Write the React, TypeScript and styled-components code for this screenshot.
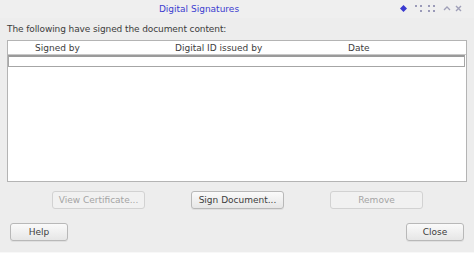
import React from 'react';
import styled, { createGlobalStyle } from 'styled-components';

const GlobalStyle = createGlobalStyle`
  html, body {
    margin: 0;
    padding: 0;
    background: #ededed;
  }
  * {
    box-sizing: border-box;
  }
`;

const Window = styled.div`
  width: 474px;
  height: 253px;
  display: flex;
  flex-direction: column;
  background: #ededed;
  font-family: 'DejaVu Sans', sans-serif;
  font-size: 9px;
  color: #3c3c3c;
  border-bottom: 1px solid #f8f8f8;
  overflow: hidden;
`;

const TitleBar = styled.div`
  height: 18px;
  display: flex;
  align-items: center;
  justify-content: center;
  position: relative;
  padding-right: 76px;
  background: #efefef;
`;

const Title = styled.span`
  color: #3c3ccf;
  font-size: 9px;
  padding-bottom: 1px;
`;

const Controls = styled.div`
  position: absolute;
  right: 12px;
  top: 5px;
  display: flex;
  align-items: center;
`;

const Ctl = styled.span<{ $gap: number }>`
  display: flex;
  margin-left: ${({ $gap }) => $gap}px;
`;

const Body = styled.div`
  flex: 1;
  display: flex;
  flex-direction: column;
  padding: 0 7px;
`;

const Caption = styled.div`
  height: 22px;
  display: flex;
  align-items: center;
  padding-bottom: 1px;
  letter-spacing: -0.1px;
`;

const Table = styled.div`
  width: 460px;
  height: 142px;
  background: #ffffff;
  border: 1px solid #b4b4b4;
  display: flex;
  flex-direction: column;
`;

const HeaderRow = styled.div`
  height: 14px;
  display: grid;
  grid-template-columns: 27px 140px 173px 1fr;
  align-items: center;
  border-bottom: 1px solid #c8c8c8;
`;

const HeaderCell = styled.span`
  white-space: nowrap;
`;

const FocusRow = styled.div`
  height: 12px;
  margin-right: 1px;
  border: 1px solid #a6a6a6;
  border-top: 2px solid #9a9a9a;
`;

const ActionRow = styled.div`
  height: 41px;
  display: flex;
  align-items: flex-start;
  padding: 9px 0 0 45px;
  gap: 46px;
`;

const Button = styled.button<{ $w: number; $disabled?: boolean }>`
  width: ${({ $w }) => $w}px;
  height: 18px;
  padding: 0;
  font-family: 'DejaVu Sans', sans-serif;
  font-size: 9px;
  border-radius: 3px;
  border: 1px solid ${({ $disabled }) => ($disabled ? '#d2d2d2' : '#b8b8b8')};
  color: ${({ $disabled }) => ($disabled ? '#a4a4a4' : '#3c3c3c')};
  background: ${({ $disabled }) =>
    $disabled ? '#f1f1f1' : 'linear-gradient(#fafafa, #e6e6e6)'};
  box-shadow: ${({ $disabled }) => ($disabled ? 'none' : '0 1px 0 rgba(0,0,0,0.06)')};
`;

const FooterRow = styled.div`
  display: flex;
  justify-content: space-between;
  padding: 0 3px;
`;

const Diamond = () => (
  <svg width="7" height="7" viewBox="0 0 7 7">
    <path d="M3.5 0 L7 3.5 L3.5 7 L0 3.5 Z" fill="#3a3ad0" />
  </svg>
);

const Dots = ({ grid }: { grid?: boolean }) => (
  <svg width="7" height="7" viewBox="0 0 7 7" fill="#9a9ab8">
    <rect x="0" y="0" width="2" height="2" />
    <rect x="5" y="0" width="2" height="2" />
    {grid ? <rect x="0" y="5" width="2" height="2" /> : null}
    <rect x="5" y="5" width="2" height="2" />
  </svg>
);

const Caret = () => (
  <svg width="8" height="7" viewBox="0 0 8 7">
    <path d="M1 5 L4 2 L7 5" stroke="#a0a0b8" strokeWidth="1.3" fill="none" />
  </svg>
);

const Cross = () => (
  <svg width="7" height="7" viewBox="0 0 7 7">
    <path d="M1 1 L6 6 M6 1 L1 6" stroke="#a0a0b8" strokeWidth="1.4" />
  </svg>
);

const App: React.FC = () => (
  <Window>
    <GlobalStyle />
    <TitleBar>
      <Title>Digital Signatures</Title>
      <Controls>
        <Ctl $gap={0}><Diamond /></Ctl>
        <Ctl $gap={8}><Dots /></Ctl>
        <Ctl $gap={6}><Dots grid /></Ctl>
        <Ctl $gap={8}><Caret /></Ctl>
        <Ctl $gap={4}><Cross /></Ctl>
      </Controls>
    </TitleBar>
    <Body>
      <Caption>The following have signed the document content:</Caption>
      <Table>
        <HeaderRow>
          <span />
          <HeaderCell>Signed by</HeaderCell>
          <HeaderCell>Digital ID issued by</HeaderCell>
          <HeaderCell>Date</HeaderCell>
        </HeaderRow>
        <FocusRow />
      </Table>
      <ActionRow>
        <Button $w={93} $disabled>View Certificate...</Button>
        <Button $w={93}>Sign Document...</Button>
        <Button $w={93} $disabled>Remove</Button>
      </ActionRow>
      <FooterRow>
        <Button $w={58}>Help</Button>
        <Button $w={58}>Close</Button>
      </FooterRow>
    </Body>
  </Window>
);

export default App;
